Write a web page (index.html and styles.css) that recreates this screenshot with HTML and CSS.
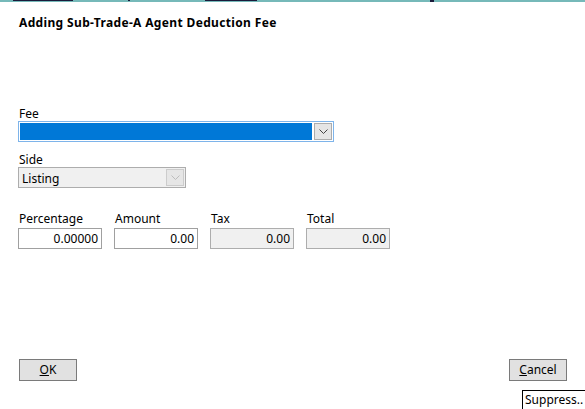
FILE: index.html
```html
<!DOCTYPE html>
<html>
<head>
<meta charset="utf-8">
<link rel="stylesheet" href="styles.css">
</head>
<body>
<div class="topline">
  <span class="frag f1"></span><span class="frag f2"></span><span class="frag f3"></span><span class="frag f4"></span>
</div>
<div class="dialog">
  <h1 class="title">Adding Sub-Trade-A Agent Deduction Fee</h1>
  <div class="field fee">
    <label class="lbl">Fee</label>
    <div class="combo combo-fee">
      <div class="combo-value selected"></div>
      <div class="combo-btn">
        <svg width="9" height="5" viewBox="0 0 9 5"><path d="M0.5 0.5 L4.5 4.5 L8.5 0.5" fill="none" stroke="#444" stroke-width="1"/></svg>
      </div>
    </div>
  </div>
  <div class="field side">
    <label class="lbl">Side</label>
    <div class="combo combo-side">
      <div class="combo-value">Listing</div>
      <div class="combo-btn disabled">
        <svg width="9" height="5" viewBox="0 0 9 5"><path d="M0.5 0.5 L4.5 4.5 L8.5 0.5" fill="none" stroke="#bcbcbc" stroke-width="1"/></svg>
      </div>
    </div>
  </div>
  <div class="amounts">
    <div class="amt"><label class="lbl">Percentage</label><div class="box">0.00000</div></div>
    <div class="amt"><label class="lbl">Amount</label><div class="box">0.00</div></div>
    <div class="amt"><label class="lbl">Tax</label><div class="box ro">0.00</div></div>
    <div class="amt"><label class="lbl">Total</label><div class="box ro">0.00</div></div>
  </div>
  <div class="buttons">
    <button class="btn"><u>O</u>K</button>
    <button class="btn"><u>C</u>ancel</button>
  </div>
</div>
<div class="tip">Suppress..</div>
</body>
</html>
```
FILE: styles.css
```css
* { box-sizing: border-box; }
html, body { margin: 0; padding: 0; }
body {
  width: 585px;
  height: 409px;
  background: #fff;
  font-family: "Noto Sans", "Open Sans", sans-serif;
  font-size: 12px;
  color: #000;
  position: relative;
  overflow: hidden;
}
.topline {
  height: 2px;
  background: #76b9b9;
  position: relative;
}
.frag { position: absolute; top: 0; height: 1px; background: #1a1a3a; }
.f1 { left: 13px; width: 60px; }
.f2 { left: 205px; width: 52px; }
.f3 { left: 430px; width: 4px; height: 2px; }
.f4 { left: 128px; width: 2px; }
.dialog {
  padding: 13px 18px 0 18px;
  display: flex;
  flex-direction: column;
  height: 407px;
}
.title {
  margin: 0 0 0 1px;
  font-size: 12px;
  font-weight: bold;
  line-height: 16px;
  letter-spacing: 0.35px;
}
.lbl { display: block; line-height: 15px; padding-left: 1px; }
.fee { margin-top: 75px; }
.combo {
  display: flex;
  height: 21px;
  border: 1px solid #7eb4ea;
}
.combo-fee { width: 316px; }
.combo-value { flex: 1; line-height: 19px; padding-left: 3px; }
.combo-value.selected { background: #0078d7; margin: 1px; }
.combo-btn {
  width: 18px;
  margin: 1px;
  background: #e5e5e5;
  border: 1px solid #acacac;
  display: flex;
  align-items: center;
  justify-content: center;
}
.side { margin-top: 10px; }
.combo-side {
  width: 168px;
  border-color: #adadad;
  background: #f0f0f0;
}
.combo-side .combo-value { line-height: 19px; padding-left: 3px; margin-top: 1px;}
.combo-btn.disabled { background: #e6e6e6; border-color: #cccccc; }
.amounts {
  display: flex;
  gap: 12px;
  margin-top: 23px;
}
.amt .lbl { margin-bottom: 2px; }
.box {
  width: 84px;
  height: 21px;
  border: 1px solid #a0a0a0;
  text-align: right;
  padding-right: 3px;
  line-height: 19px;
  background: #fff;
}
.box.ro { background: #f0f0f0; border-color: #adadad; }
.buttons {
  display: flex;
  justify-content: space-between;
  margin-top: 110px;
  padding: 0 0 0 1px;
}
.btn {
  width: 58px;
  height: 22px;
  background: #e1e1e1;
  border: 1px solid #7a7a7a;
  font-family: inherit;
  font-size: 12px;
  color: #000;
  padding: 0;
  line-height: 18px;
}
.tip {
  position: absolute;
  left: 522px;
  top: 390px;
  width: 70px;
  height: 22px;
  border: 1px solid #000;
  background: #fff;
  padding-left: 2px;
  line-height: 18px;
  font-size: 12px;
}
```
